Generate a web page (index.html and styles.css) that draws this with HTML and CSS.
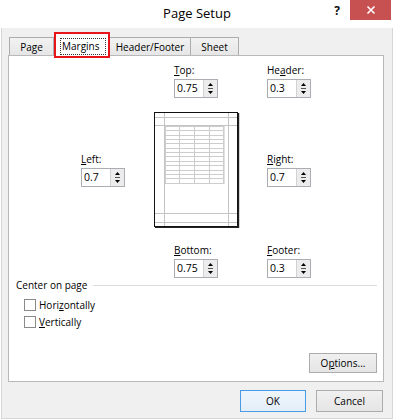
FILE: index.html
```html
<!DOCTYPE html>
<html>
<head>
<meta charset="utf-8">
<link rel="stylesheet" href="styles.css">
</head>
<body>
<div class="win">
  <div class="titlebar">
    <div class="title">Page Setup</div>
    <div class="controls">
      <span class="help">?</span>
      <span class="close"><svg width="10" height="10" viewBox="0 0 10 10"><path d="M1.5 1.5 L8.5 8.5 M8.5 1.5 L1.5 8.5" stroke="#fff" stroke-width="1.6" fill="none"/></svg></span>
    </div>
  </div>
  <div class="client">
    <div class="tabs">
      <div class="tab tab-page">Page</div>
      <div class="tab tab-sel"><span class="focus">Margins</span></div>
      <div class="tab tab-hf">Header/Footer</div>
      <div class="tab tab-sheet">Sheet</div>
    </div>
    <div class="panel">
      <div class="mgrid">
        <div class="field c2 off-mid">
          <div class="lbl"><u>T</u>op:</div>
          <div class="spin"><span class="val">0.75</span><span class="sbtn"><svg width="13" height="17" viewBox="0 0 13 17"><path d="M4 6 L6.5 3 L9 6 Z" fill="#000"/><path d="M4 8.5 H9" stroke="#555" stroke-width="1"/><path d="M4 11 L9 11 L6.5 14 Z" fill="#000"/></svg></span></div>
        </div>
        <div class="field c3 off-right">
          <div class="lbl">He<u>a</u>der:</div>
          <div class="spin"><span class="val">0.3</span><span class="sbtn"><svg width="13" height="17" viewBox="0 0 13 17"><path d="M4 6 L6.5 3 L9 6 Z" fill="#000"/><path d="M4 8.5 H9" stroke="#555" stroke-width="1"/><path d="M4 11 L9 11 L6.5 14 Z" fill="#000"/></svg></span></div>
        </div>

        <div class="field c1 off-left mid">
          <div class="lbl"><u>L</u>eft:</div>
          <div class="spin"><span class="val">0.7</span><span class="sbtn"><svg width="13" height="17" viewBox="0 0 13 17"><path d="M4 6 L6.5 3 L9 6 Z" fill="#000"/><path d="M4 8.5 H9" stroke="#555" stroke-width="1"/><path d="M4 11 L9 11 L6.5 14 Z" fill="#000"/></svg></span></div>
        </div>
        <div class="preview c2">
          <svg width="88" height="118" viewBox="0 0 88 118">
            <rect x="2.5" y="2.5" width="83" height="114" fill="#fff" stroke="#111" stroke-width="1"/>
            <path d="M86.5 3 V118 M3 117.5 H87" stroke="#222" stroke-width="1.4" fill="none"/>
            <g stroke="#c4c4c4" stroke-width="1" fill="none">
              <path d="M12.5 3 V116 M76.5 3 V116"/>
              <path d="M3 7.5 H85 M3 15.5 H85 M3 103.5 H85 M3 112.5 H85"/>
            </g>
            <g stroke="#cdcdcd" stroke-width="1" fill="none">
              <path d="M13.5 16 V74 M27.5 16 V74 M42.5 16 V74 M57.5 16 V74 M71.5 16 V74"/>
              <path d="M13 16.5 H72 M13 20.5 H72 M13 25.5 H72 M13 29.5 H72 M13 33.5 H72 M13 38.5 H72 M13 42.5 H72 M13 46.5 H72 M13 51.5 H72 M13 55.5 H72 M13 60.5 H72 M13 64.5 H72 M13 68.5 H72 M13 73.5 H72"/>
            </g>
            <path d="M72.5 16 V74" stroke="#e2e2e2" stroke-width="1"/>
          </svg>
        </div>
        <div class="field c3 off-right mid">
          <div class="lbl"><u>R</u>ight:</div>
          <div class="spin"><span class="val">0.7</span><span class="sbtn"><svg width="13" height="17" viewBox="0 0 13 17"><path d="M4 6 L6.5 3 L9 6 Z" fill="#000"/><path d="M4 8.5 H9" stroke="#555" stroke-width="1"/><path d="M4 11 L9 11 L6.5 14 Z" fill="#000"/></svg></span></div>
        </div>

        <div class="field c2 off-mid row3">
          <div class="lbl"><u>B</u>ottom:</div>
          <div class="spin"><span class="val">0.75</span><span class="sbtn"><svg width="13" height="17" viewBox="0 0 13 17"><path d="M4 6 L6.5 3 L9 6 Z" fill="#000"/><path d="M4 8.5 H9" stroke="#555" stroke-width="1"/><path d="M4 11 L9 11 L6.5 14 Z" fill="#000"/></svg></span></div>
        </div>
        <div class="field c3 off-right row3">
          <div class="lbl"><u>F</u>ooter:</div>
          <div class="spin"><span class="val">0.3</span><span class="sbtn"><svg width="13" height="17" viewBox="0 0 13 17"><path d="M4 6 L6.5 3 L9 6 Z" fill="#000"/><path d="M4 8.5 H9" stroke="#555" stroke-width="1"/><path d="M4 11 L9 11 L6.5 14 Z" fill="#000"/></svg></span></div>
        </div>
      </div>

      <div class="legend">Center on page</div>
      <div class="checks">
        <div class="check"><span class="box"></span><span>Hori<u>z</u>ontally</span></div>
        <div class="check"><span class="box"></span><span><u>V</u>ertically</span></div>
      </div>

      <div class="opt-row"><div class="btn btn-opt">O<u>p</u>tions...</div></div>
    </div>
    <div class="buttons">
      <div class="btn btn-ok">OK</div>
      <div class="btn btn-cancel">Cancel</div>
    </div>
  </div>
</div>
</body>
</html>
```

FILE: styles.css
```css
* { box-sizing: border-box; }
body {
  margin: 0;
  font-family: "Open Sans", "Noto Sans", sans-serif;
  font-size: 10px;
  color: #000;
  background: #fff;
}
u { text-decoration: underline; text-underline-offset: 1px; }

.win {
  width: 394px;
  height: 420px;
  background: #fff;
  padding: 0 1px 1px 1px;
  display: flex;
  flex-direction: column;
}

.titlebar {
  height: 28px;
  flex: none;
  display: grid;
  grid-template-columns: 1fr auto 1fr;
  align-items: start;
}
.title {
  grid-column: 2;
  font-size: 13px;
  line-height: 26px;
  color: #000;
}
.controls {
  grid-column: 3;
  justify-self: end;
  display: flex;
  align-items: flex-start;
}
.help {
  font-size: 12px;
  font-weight: bold;
  line-height: 22px;
  margin-right: 10px;
  color: #111;
}
.close {
  width: 41px;
  height: 20px;
  background: #c75050;
  display: flex;
  align-items: center;
  justify-content: center;
  margin-right: 2px;
}

.client {
  flex: 1;
  background: #f0f0f0;
  border: 1px solid #d6d6d6;
  border-top: none;
  padding: 4px 8px 0 6px;
  display: flex;
  flex-direction: column;
}

.tabs {
  height: 23px;
  display: flex;
  align-items: flex-end;
  padding-left: 1px;
}
.tab {
  height: 18px;
  border: 1px solid #acacac;
  border-bottom: none;
  background: linear-gradient(#f2f2f2, #e6e6e6);
  text-align: center;
  line-height: 16px;
  padding-top: 1px;
}
.tab-page { width: 45px; }
.tab-hf { width: 81px; border-left: none; }
.tab-sheet { width: 48px; border-left: none; }
.tab-sel {
  width: 56px;
  height: 26px;
  margin-bottom: -3px;
  border: 2px solid #e8141c;
  background: #fff;
  position: relative;
  z-index: 1;
  padding: 4px 0 0 4px;
  text-align: left;
  line-height: 15px;
}
.focus {
  display: inline-block;
  border: 1px dotted #333;
  padding: 0 5px 0 1px;
  line-height: 15px;
}

.panel {
  height: 327px;
  flex: none;
  background: #fff;
  border: 1px solid #b9b9b9;
  display: flex;
  flex-direction: column;
  padding: 7px 6px 8px 0;
}

.mgrid {
  display: grid;
  grid-template-columns: 143px 88px 1fr;
  row-gap: 12px;
  align-items: start;
}
.c1 { grid-column: 1; }
.c2 { grid-column: 2; }
.c3 { grid-column: 3; }
.off-left { margin-left: 72px; }
.off-mid { margin-left: 22px; }
.off-right { margin-left: 27px; }
.mid { align-self: center; }
.row3 { margin-top: 3px; }
.preview { height: 118px; }
.preview svg { display: block; }

.field {
  display: flex;
  flex-direction: column;
  gap: 1px;
}
.lbl { line-height: 15px; }
.spin {
  width: 44px;
  height: 19px;
  border: 1px solid #abadb3;
  background: #fff;
  display: flex;
}
.val {
  flex: 1;
  padding-left: 2px;
  line-height: 17px;
  font-size: 10.5px;
}
.sbtn {
  width: 14px;
  background: #ececec;
  border-left: 1px solid #d2d2d2;
}
.sbtn svg { display: block; }

.legend {
  display: flex;
  align-items: center;
  gap: 6px;
  padding-left: 7px;
  line-height: 15px;
}
.legend::after {
  content: "";
  flex: 1;
  height: 1px;
  background: #dcdcdc;
}
.checks {
  padding-left: 15px;
  margin-top: 4px;
  display: flex;
  flex-direction: column;
  gap: 2px;
}
.check {
  display: flex;
  align-items: center;
  gap: 3px;
  height: 15px;
}
.box {
  width: 12px;
  height: 12px;
  border: 1px solid #8a8a8a;
  background: #fff;
}

.opt-row {
  margin-top: auto;
  display: flex;
  justify-content: flex-end;
}
.btn {
  display: flex;
  align-items: center;
  justify-content: center;
  border: 1px solid #acacac;
  background: linear-gradient(#f0f0f0, #e5e5e5);
}
.btn-opt { width: 68px; height: 20px; }

.buttons {
  display: flex;
  justify-content: flex-end;
  gap: 10px;
  margin-top: 8px;
  padding-right: 1px;
}
.btn-ok {
  width: 66px;
  height: 22px;
  border-color: #4a9be6;
  background: linear-gradient(#eef5fc, #e4eef8);
}
.btn-cancel { width: 67px; height: 22px; }
```
